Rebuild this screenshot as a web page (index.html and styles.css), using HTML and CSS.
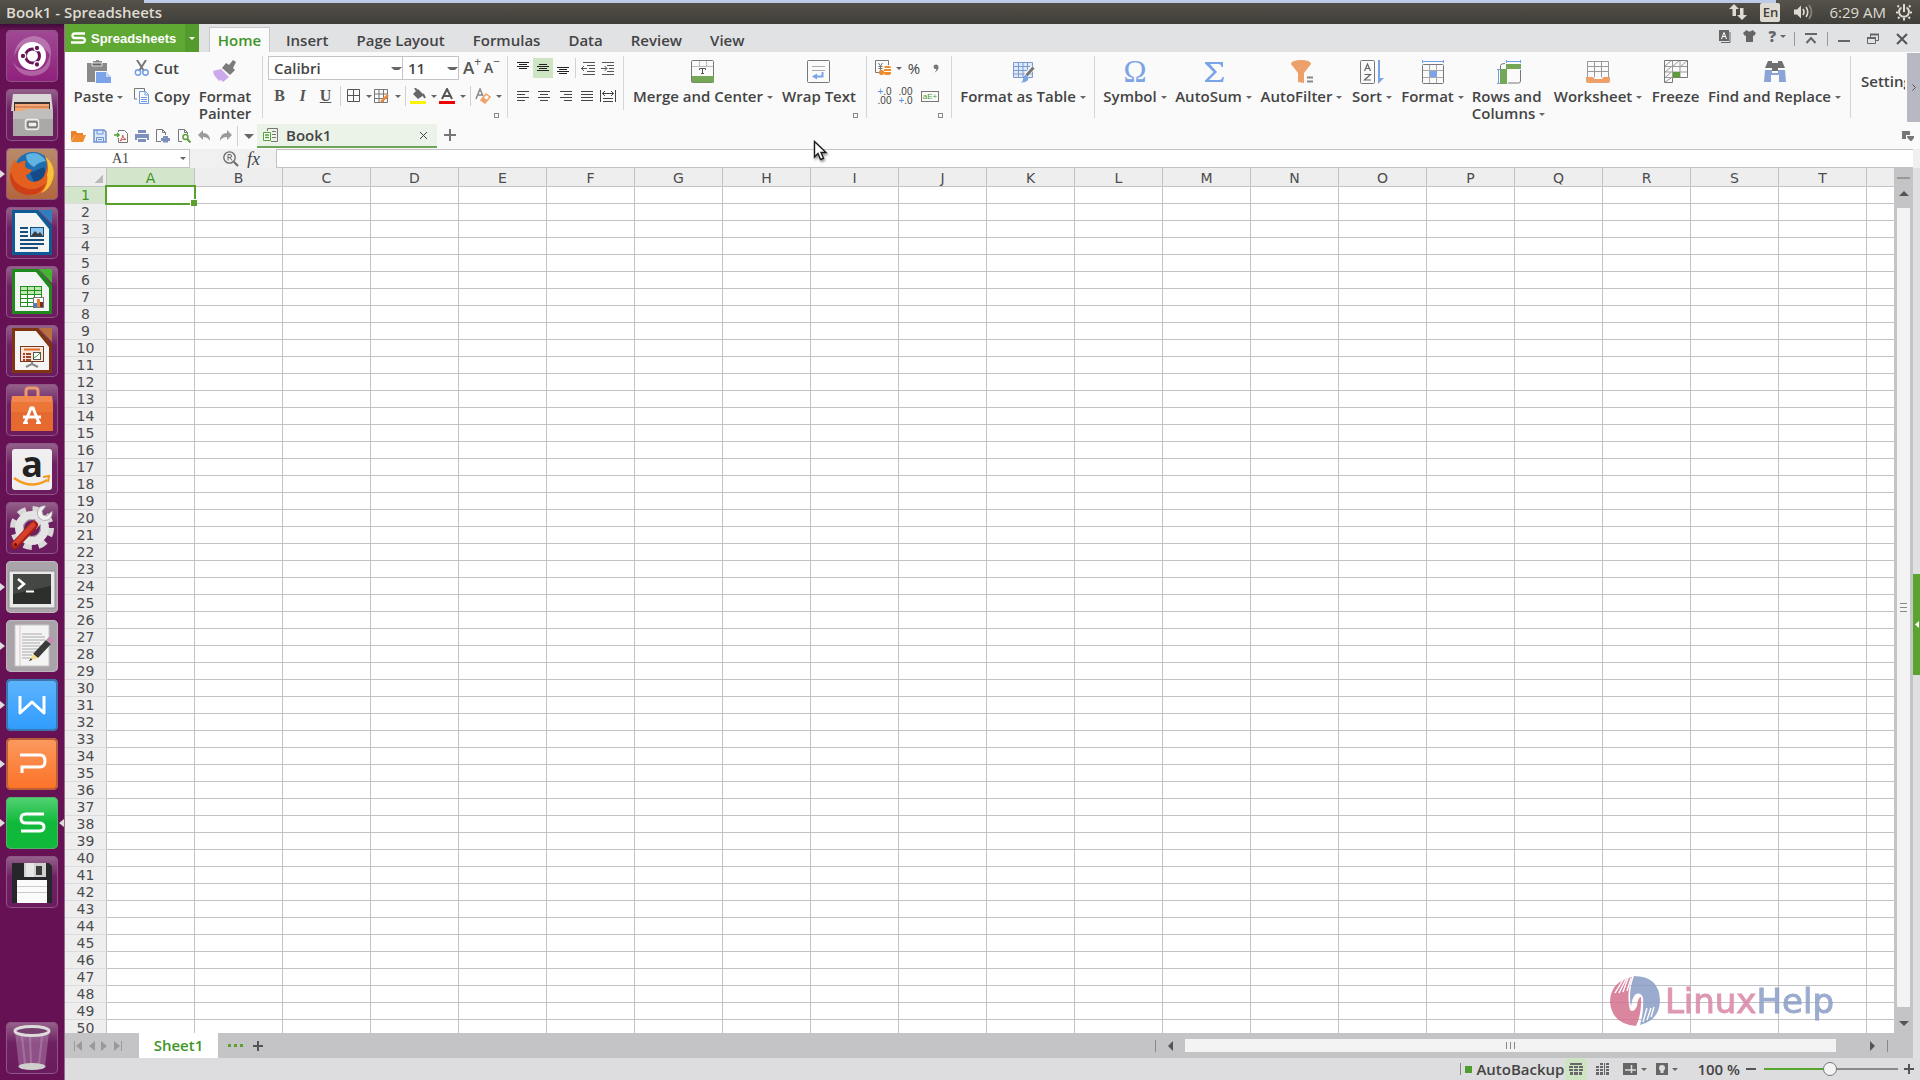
FILE: index.html
```html
<!DOCTYPE html>
<html lang="en">
<head>
<meta charset="utf-8">
<title>Book1 - Spreadsheets</title>
<link rel="stylesheet" href="styles.css">
</head>
<body>
<header class="panel">
  <span class="panel-title">Book1 - Spreadsheets</span>
  <div class="indicators">
    <svg width="18" height="18" viewBox="0 0 18 18" fill="#dfdbd2"><path d="M5 1l5 5H7v7H3.500V6H0zM13 17l-5-5h3V5h3.500v7H18z"/></svg>
    <span class="lang">En</span>
    <svg width="20" height="18" viewBox="0 0 20 18" fill="none" stroke="#dfdbd2" stroke-width="1.600"><path d="M1 6.500h3l4-4v13l-4-4H1z" fill="#dfdbd2" stroke="none"/><path d="M10 6q2 3 0 6M13 4q3.500 5 0 10"/><path d="M16 2q5 7 0 14" stroke="#8b8880"/></svg>
    <span class="clock">6:29 AM</span>
    <svg width="18" height="18" viewBox="0 0 18 18" fill="none" stroke="#dfdbd2"><path d="M6.500 4.500a5 5 0 1 0 5 0" stroke-width="2"/><path d="M9 1v8" stroke-width="2"/><path d="M4 4L2.500 2.500M14 4l1.500-1.500M3 9.500H1M17 9.500h-2M4.500 14L3 15.500M13.500 14l1.500 1.500M9 15v2.500" stroke-width="2"/></svg>
  </div>
</header>
<div class="desktop">
<nav class="launcher" aria-label="Launcher">
  <a href="#" class="tile dash" title="Dash"><svg viewBox="0 0 52 52"><path d="M8 26Q10 8 28 6Q46 8 45 26Q36 12 22 13Q12 16 8 26zM26 46Q12 46 7 32Q12 40 24 41Q42 42 44 22Q48 44 26 46z" fill="#fff" opacity=".28"/><circle cx="26" cy="26" r="14" fill="#fff"/><circle cx="26.500" cy="26" r="7" fill="none" stroke="#6b1458" stroke-width="3"/><g stroke="#fff" stroke-width="1.300" fill="#6b1458"><circle cx="17" cy="26" r="2.800"/><circle cx="31" cy="18" r="2.800"/><circle cx="31" cy="34.500" r="2.800"/></g></svg></a>
  <a href="#" class="tile" title="Files"><svg viewBox="0 0 52 52"><path d="M7 5h38l2 17H5z" fill="#d9d7d5"/><path d="M8 13h36v10H8z" fill="#3d3330"/><path d="M9 15h34v8H9z" fill="#f3a877"/><path d="M9 18h34" stroke="#c26b3b"/><path d="M7 22h11l2-2h27v27H7z" fill="#a9a8a7"/><path d="M7 22h11l2-2h27v10H7z" fill="#bfbebd"/><rect x="19.500" y="30.500" width="13" height="10" rx="2" fill="#b3b2b1" stroke="#ececec" stroke-width="1.500"/><path d="M22 33h9v5h-9z" fill="#eee" stroke="#444"/></svg></a>
  <a href="#" class="tile warm running" title="Firefox"><svg viewBox="0 0 52 52"><circle cx="27" cy="23" r="19" fill="#1f6fb0"/><path d="M20 7q12-6 20 6q-8 1-12 6q-8-4-8-12z" fill="#5fb4e2"/><path d="M24 25l14-6 4 12-11 9z" fill="#164a86"/><path d="M39 8q14 12 6 28Q36 48 24 47Q6 45 4 28Q4 18 9 12Q10 15 13 15Q17 12 20 13Q18 17 20 20L26 22Q24 26 20 27Q21 33 28 34Q38 32 39 25Q43 18 39 8z" fill="#e4601f"/><path d="M39 8q14 12 6 28q-4 7-10 9q8-8 6-18q3-9-2-19z" fill="#f8c13a"/><path d="M5 24q3 14 18 17q10 1 17-6q-5 13-18 12Q5 45 4 28z" fill="#cf3f17"/></svg></a>
  <a href="#" class="tile" title="Writer"><svg viewBox="0 0 52 52"><path d="M6 3h26l14 16v29H6z" fill="#0d5a94"/><path d="M33 3h13v14z" fill="#2f7fc0"/><path d="M9 6h21l13 16v23H9z" fill="#f4f4f4"/><path d="M14 21h8M14 25h8M14 29h8M14 33h24M14 37h24M14 41h18" stroke="#164e7c" stroke-width="2"/><rect x="24.500" y="20.500" width="13" height="9" fill="#8ec5ee" stroke="#164e7c"/><path d="M25 29l4-5 3 3 2-2 3 4z" fill="#3c3c3c"/></svg></a>
  <a href="#" class="tile" title="Calc"><svg viewBox="0 0 52 52"><path d="M6 3h26l14 16v29H6z" fill="#1f8a1c"/><path d="M33 3h13v14z" fill="#43b52f"/><path d="M9 6h21l13 16v23H9z" fill="#f4f4f4"/><path d="M14 20h22v21H14z" fill="#1f8f1d"/><path d="M15 21h6v3h-6zM22 21h6v3h-6zM29 21h6v3h-6zM15 25h6v3h-6zM22 25h6v3h-6zM29 25h6v3h-6z" fill="#bfe8b0"/><path d="M15 29h6v3h-6zM22 29h6v3h-6zM15 33h6v3h-6zM22 33h6v3h-6zM15 37h6v3h-6zM22 37h6v3h-6zM29 29h6v3h-6z" fill="#fff"/><rect x="27.500" y="31.500" width="10" height="10" fill="#fff" stroke="#777"/><path d="M28 37h3v4h-3z" fill="#3b7fd0"/><path d="M31 33h3v8h-3z" fill="#e8822b"/><path d="M34 36h3v5h-3z" fill="#7d2a1d"/></svg></a>
  <a href="#" class="tile" title="Impress"><svg viewBox="0 0 52 52"><path d="M6 3h26l14 16v29H6z" fill="#7f3512"/><path d="M33 3h13v14z" fill="#b9703f"/><path d="M9 6h21l13 16v23H9z" fill="#f4f4f4"/><rect x="14.500" y="21.500" width="23" height="15" fill="#f7e8dc" stroke="#7c3a1c"/><path d="M18 24.500h16" stroke="#e06a2c" stroke-width="2"/><path d="M17 29h2M17 32h2M17 35h2" stroke="#b33" stroke-width="2"/><path d="M20 29h5M20 32h5M20 35h5" stroke="#9a4a2a" stroke-width="2"/><rect x="27.500" y="27.500" width="7" height="7" fill="#fff" stroke="#555"/><path d="M28 33l3-2 3-3" stroke="#3a3" fill="none"/><path d="M26 37v2l-6 3M26 39l6 3" stroke="#888" stroke-width="2" fill="none"/></svg></a>
  <a href="#" class="tile" title="Software"><svg viewBox="0 0 52 52"><path d="M20 12V7q0-3 3-3h6q3 0 3 3v5" fill="none" stroke="#e99a6e" stroke-width="3"/><path d="M6 12h40l1 7H5z" fill="#f2874f"/><path d="M5 18h42v29H5z" fill="#e66a30"/><path d="M5 18h42v10H5z" fill="#ec7538"/><path d="M19 39l6-15h2l6 15" fill="none" stroke="#fff" stroke-width="3"/><path d="M17 33h18" stroke="#fff" stroke-width="3"/><path d="M17 39h5M30 39h5" stroke="#fff" stroke-width="2"/></svg></a>
  <a href="#" class="tile" title="Amazon"><svg viewBox="0 0 52 52"><rect x="6" y="6" width="40" height="41" rx="3" fill="#efefef"/><text x="26" y="34" class="amazon-a" text-anchor="middle">a</text><path d="M8 35q17 12 33 2" fill="none" stroke="#f59a1f" stroke-width="2.600"/><path d="M37 34l6-1-1 6" fill="none" stroke="#f59a1f" stroke-width="2"/></svg></a>
  <a href="#" class="tile" title="System Settings"><svg viewBox="0 0 52 52"><circle cx="26" cy="26" r="18.500" fill="none" stroke="#d8d8d8" stroke-width="7" stroke-dasharray="8 6.530"/><circle cx="26" cy="26" r="13" fill="none" stroke="#e4e4e4" stroke-width="8"/><circle cx="26" cy="26" r="8.500" fill="none" stroke="#b9b9b9"/><path d="M28 25l6-7" stroke="#ddd" stroke-width="6"/><path d="M46 9l-5 5-4-1-1-4 4-5q-6-1-8 4q-2 4 1 8q4 4 9 2q5-3 4-9z" fill="#f1f1f1" stroke="#999" stroke-width=".7"/><path d="M9 43L28 23" stroke="#a51f12" stroke-width="8" stroke-linecap="round"/><path d="M9 42L27 23" stroke="#d6402f" stroke-width="5" stroke-linecap="round"/><circle cx="9.500" cy="42.500" r="1.500" fill="#5b0d08"/></svg></a>
  <a href="#" class="tile gray running" title="Terminal"><svg viewBox="0 0 52 52"><rect x="3" y="10" width="46" height="37" rx="1" fill="#e9e9e9" stroke="#8c8c8c"/><rect x="7" y="13" width="38" height="30" fill="#2d2f2d"/><path d="M7 13h38v12L7 33z" fill="#454745"/><path d="M12 18l6 5-6 5" fill="none" stroke="#fff" stroke-width="2.500"/><path d="M20 30.500h8" stroke="#fff" stroke-width="2"/></svg></a>
  <a href="#" class="tile gray running" title="Text Editor"><svg viewBox="0 0 52 52"><path d="M9 5h34v41H9z" fill="#f4f4f4" stroke="#c9c6c6"/><path d="M14 5v41" stroke="#e2c3c3"/><path d="M16 14h20M16 17h23M16 20h23M16 23h18M16 26h20M16 29h16M16 32h14M16 35h10M16 38h8" stroke="#aaa"/><path d="M27 34L40 20l5 4-13 14z" fill="#3b3b3b"/><path d="M40 20l4-4 4 5-3 3z" fill="#c78bb4"/><path d="M27 34l-4 7 9-3z" fill="#f2dc8a"/><path d="M23 41l2-3 1 2z" fill="#222"/></svg></a>
  <a href="#" class="tile blue running" title="Writer WPS"><svg viewBox="0 0 52 52"><path d="M14 17v17l12-11 12 11V17" fill="none" stroke="#fff" stroke-width="3" stroke-linejoin="round"/></svg></a>
  <a href="#" class="tile orange running" title="Presentation WPS"><svg viewBox="0 0 52 52"><path d="M14 17h20q5 0 5 6t-5 6H16v6" fill="none" stroke="#fff" stroke-width="3"/></svg></a>
  <a href="#" class="tile green running active" title="Spreadsheets WPS"><svg viewBox="0 0 52 52"><path d="M38 17H20q-5 0-5 4.500t5 4.500h13q5 0 5 4t-5 4H15" fill="none" stroke="#fff" stroke-width="3"/></svg></a>
  <a href="#" class="tile" title="Floppy Disk"><svg viewBox="0 0 52 52"><path d="M6 7h37l3 3v37H6z" fill="#26272b"/><path d="M18 7h22v14H18z" fill="#cfcfcf"/><path d="M20 7h8v14h-8z" fill="#e6e6e6"/><rect x="30" y="10" width="6" height="9" fill="#3a3a3a"/><path d="M11 24h30v23H11z" fill="#fbfbfb"/><path d="M11 30.500h30M11 36.500h30" stroke="#ccc"/></svg></a>
  <a href="#" class="tile trash" title="Trash"><svg viewBox="0 0 52 52"><path d="M9 10l4 35q13 5 26 0l4-35z" fill="#d9c4de" opacity=".3"/><path d="M16 14l3 28M24 14l1 28M36 14l-3 28" stroke="#fff" opacity=".18" stroke-width="2"/><ellipse cx="26" cy="9" rx="17" ry="4.500" fill="#77406f" stroke="#dcdcdc" stroke-width="3"/><ellipse cx="26" cy="44.500" rx="13.500" ry="3.500" fill="#cfcfcf"/></svg></a>
</nav>

<main class="app">
  <div class="tabbar">
    <button class="app-menu"><svg width="15" height="12" viewBox="0 0 15 12" fill="none" stroke="#fff" stroke-width="2.400"><path d="M14 1.500H4Q1.500 1.500 1.500 3.700T4 6h7.500q2.300 0 2.300 2.300t-2.300 2.200H0"/></svg><span class="app-name">Spreadsheets</span><span class="app-drop"><i class="caret"></i></span></button>
    <div class="tabs">
      <button class="tab on">Home</button><button class="tab">Insert</button><button class="tab">Page Layout</button><button class="tab">Formulas</button><button class="tab">Data</button><button class="tab">Review</button><button class="tab">View</button>
    </div>
    <div class="wintools">
      <div class="helpers">
      <button title="Dictionary"><svg width="12" height="13" viewBox="0 0 12 13"><path d="M0 0h10v11H0z" fill="#666"/><path d="M11 2v10.500H2" fill="none" stroke="#666"/><path d="M2.500 9L5 2.500 7.500 9M3.500 6.500h3" fill="none" stroke="#fff"/></svg></button>
      <button title="Skin"><svg width="13" height="12" viewBox="0 0 13 12"><path d="M3.500 0Q6.500 3 9.500 0L13 3l-2 3-1-.5V12H3V5.500L2 6 0 3z" fill="#666"/></svg></button>
      <button class="help" title="Help"><b>?</b><i class="caret"></i></button>
      </div>
      <span class="rule"></span>
      <button title="Collapse ribbon"><svg width="12" height="12" viewBox="0 0 12 12" fill="none" stroke="#666" stroke-width="2"><path d="M0 1h12M1.500 10L6 5l4.500 5"/></svg></button>
      <span class="rule"></span>
      <button title="Minimize"><svg width="12" height="12" viewBox="0 0 12 12"><path d="M0 7h12v2H0z" fill="#666"/></svg></button>
      <button title="Restore"><svg width="12" height="12" viewBox="0 0 12 12" fill="none" stroke="#666"><path d="M.5 5.500h8v5h-8z M3.500 5V1.500h8v6H9" /><path d="M0 5h9M3 1.500h9" stroke-width="2"/></svg></button>
      <button title="Close"><svg width="12" height="12" viewBox="0 0 12 12" fill="none" stroke="#555" stroke-width="2"><path d="M1 1l10 10M11 1L1 11"/></svg></button>
    </div>
  </div>

  <div class="ribbon">
    <section class="group clip">
      <button class="big"><svg width="24" height="24" viewBox="0 0 24 24"><path d="M0 3h6V1h3V0h3v1h3v2h5v8H8v11H0z" fill="#8a8a8a"/><path d="M5 3h10v3H5z" fill="#666" stroke="#fafafa" stroke-width=".8"/><path d="M9 12h10l5 5v6H9z" fill="#7ba3e8"/><path d="M19 12l5 5h-5z" fill="#c4d7f6"/></svg><span>Paste<i class="caret"></i></span></button>
      <div class="stack">
        <button><svg width="16" height="16" viewBox="0 0 16 16" fill="none"><path d="M3 0l7 11M12 0L5 11" stroke="#777" stroke-width="2"/><circle cx="4" cy="12.500" r="2.700" stroke="#6d9be6" stroke-width="1.400"/><circle cx="11.500" cy="12.500" r="2.700" stroke="#6d9be6" stroke-width="1.400"/></svg>Cut</button>
        <button><svg width="16" height="16" viewBox="0 0 16 16" fill="none"><path d="M3 11H.5V.5h10V3" stroke="#777"/><path d="M5.500 3.500h6l3 3v9h-9z" stroke="#6d9be6"/><path d="M11 4v3h3M7 9.500h6M7 11.500h6M7 13.500h6" stroke="#6d9be6"/></svg>Copy</button>
      </div>
      <button class="big"><svg width="24" height="24" viewBox="0 0 24 24"><path d="M20 0l3 2-3 6 2 2-5 5-8-7 4-5 3 2z" fill="#7c7c7c"/><path d="M8 9l8 8-6 5-2-2-2 1-5-6-1-4z" fill="#cda8ec"/></svg><span>Format<br>Painter</span></button>
    </section>
    <section class="group font">
      <div class="row combos">
        <label class="combo wide"><select aria-label="Font"><option>Calibri</option></select><i class="caret"></i></label>
        <label class="combo"><select aria-label="Font size"><option>11</option></select><i class="caret"></i></label>
        <button class="grow" title="Increase font size">A<sup>+</sup></button>
        <button class="grow small" title="Decrease font size">A<sup>−</sup></button>
      </div>
      <div class="row">
        <button class="bi serif"><b>B</b></button><button class="bi serif"><em>I</em></button><button class="bi serif"><u>U</u></button>
        <span class="sep"></span>
        <button class="split"><svg width="16" height="16" viewBox="0 0 16 16" fill="none" stroke="#555" stroke-width="1"><path d="M2.500 1.500h12v12h-12zM8.500 2v12M2 7.500h12"/></svg><i class="caret"></i></button>
        <button class="split"><svg width="16" height="16" viewBox="0 0 16 16" fill="none" stroke="#777"><path d="M.5 1.500h13v13H.5zM5 1v13M9.500 1v13M0 6h14M0 10.500h14"/><path d="M7 14l7-7" stroke="#ee8a3c" stroke-width="2.500"/></svg><i class="caret"></i></button>
        <span class="sep"></span>
        <button class="split"><svg width="16" height="16" viewBox="0 0 16 16"><path d="M3 6l5-5 6 6-6 4z" fill="#666"/><path d="M5 0l2 3M13 6l2 4" stroke="#666" stroke-width="2"/><path d="M0 13h16v3H0z" fill="#fbf400"/></svg><i class="caret"></i></button>
        <button class="split"><svg width="16" height="16" viewBox="0 0 16 16"><path d="M3 11L8 1l5 10M5 8h6" fill="none" stroke="#555" stroke-width="2"/><path d="M0 13h16v3H0z" fill="#f00000"/></svg><i class="caret"></i></button>
        <span class="sep"></span>
        <button class="split"><svg width="16" height="16" viewBox="0 0 16 16" fill="none"><path d="M1 11L5 1l3 7M3 7h4" stroke="#888" stroke-width="1.500"/><path d="M6 12l5-6 4 3-5 6z" fill="#fff" stroke="#efa066" stroke-width="1.500"/><path d="M6 12l2-3 4 3-2 3z" fill="#efa066"/></svg><i class="caret"></i></button>
      </div>
      <button class="dialog" title="Font settings"></button>
    </section>
    <section class="group align">
      <div class="row">
        <button class="ic"><svg width="14" height="14" viewBox="0 0 14 14" stroke="#222"><path d="M1 1.500h12M3 3.500h8M1 5.500h12M3 7.500h8"/></svg></button>
        <button class="ic on"><svg width="14" height="14" viewBox="0 0 14 14" stroke="#222"><path d="M3 3.500h8M1 5.500h12M3 7.500h8M1 9.500h12"/></svg></button>
        <button class="ic"><svg width="14" height="14" viewBox="0 0 14 14" stroke="#222"><path d="M1 6.500h12M3 8.500h8M1 10.500h12M3 12.500h8"/></svg></button>
        <span class="sep"></span>
        <button class="ic"><svg width="14" height="14" viewBox="0 0 14 14" stroke="#555" fill="none"><path d="M2 1.500h12M6 4.500h8M8 7.500h6M6 10.500h8M2 13.500h12M0 7.500h6M3 5L.5 7.500 3 10"/></svg></button>
        <button class="ic"><svg width="14" height="14" viewBox="0 0 14 14" stroke="#555" fill="none"><path d="M1 1.500h12M6 4.500h7M8 7.500h5M6 10.500h7M1 13.500h12M0 7.500h6M3.500 5L6 7.500 3.500 10"/></svg></button>
      </div>
      <div class="row spread">
        <button class="ic"><svg width="14" height="14" viewBox="0 0 14 14" stroke="#444"><path d="M1 2.500h12M1 5.500h8M1 8.500h12M1 11.500h8"/></svg></button>
        <button class="ic"><svg width="14" height="14" viewBox="0 0 14 14" stroke="#444"><path d="M1 2.500h12M3 5.500h8M1 8.500h12M3 11.500h8"/></svg></button>
        <button class="ic"><svg width="14" height="14" viewBox="0 0 14 14" stroke="#444"><path d="M1 2.500h12M5 5.500h8M1 8.500h12M5 11.500h8"/></svg></button>
        <button class="ic"><svg width="14" height="14" viewBox="0 0 14 14" stroke="#444"><path d="M1 2.500h12M1 5.500h12M1 8.500h12M1 11.500h12"/></svg></button>
        <button class="ic"><svg width="16" height="14" viewBox="0 0 16 14" stroke="#444" fill="none"><path d="M.5 1v12M15.500 1v12M2 4.500h12M5 2L2.500 4.500 5 7M11 2l2.500 2.500L11 7M3 9.500h10M3 12.500h10"/></svg></button>
      </div>
    </section>
    <section class="group merge">
      <button class="big"><svg width="24" height="24" viewBox="0 0 24 24" fill="none"><rect x=".5" y=".5" width="22" height="22" rx="1" stroke="#777"/><path d="M1 6.500h21M8.500 1v5M15.500 1v5" stroke="#bbb"/><path d="M8.500 10V8.500h6V10M11.500 8v6M10 13.500h3" stroke="#555"/><path d="M1 16h22v6.500H1z" fill="#74a856"/></svg><span>Merge and Center<i class="caret"></i></span></button>
      <button class="big"><svg width="24" height="24" viewBox="0 0 24 24" fill="none"><rect x=".5" y=".5" width="22" height="22" rx="1" stroke="#777"/><path d="M5 6.500h13M5 10.500h13" stroke="#aaa"/><path d="M15.500 12v4.500H8" stroke="#7ba3e8" stroke-width="2"/><path d="M5 16.500l5-3v6z" fill="#7ba3e8"/></svg><span>Wrap Text</span></button>
      <button class="dialog" title="Alignment settings"></button>
    </section>
    <section class="group num">
      <div class="row">
        <button class="split"><svg width="16" height="16" viewBox="0 0 16 16" fill="none"><path d="M4 12.500H.5V.5h13V5" stroke="#777"/><path d="M3.500 3L5.500 6l2-3M5.500 6v4M3.500 6.500h4M3.500 8.500h4" stroke="#777"/><rect x="9" y="6" width="7" height="9" rx="2" fill="#ee8a2c"/><rect x="4" y="10" width="5" height="5" rx="2" fill="#ee8a2c"/><path d="M9 8.500h7M9 11.500h7" stroke="#fff"/></svg><i class="caret"></i></button>
        <button class="bi pct">%</button><button class="bi" title="Comma style"><svg width="6" height="9" viewBox="0 0 6 9"><path d="M1 8.500Q3.500 7 3.500 5 .5 5.500.5 2.800.7.500 3 .5 5.500.500 5.500 3.500 5.300 7 1 8.500z" fill="#777"/></svg></button>
      </div>
      <div class="row">
        <button class="dec" title="Increase decimal"><span><i>+</i>.0</span><span>.00</span></button>
        <button class="dec" title="Decrease decimal"><span>.00</span><span><i>+</i>.0</span></button>
        <button class="dec"><span class="ae">aE+</span></button>
      </div>
      <button class="dialog" title="Number settings"></button>
    </section>
    <section class="group style">
      <button class="big"><svg width="24" height="24" viewBox="0 0 24 24" fill="none"><path d="M2.500 2.500h19v15h-19z" fill="#dfe9f8" stroke="#7c9cd0"/><path d="M7.500 3v14M12 3v14M16.500 3v14M3 6.500h18M3 10.500h18M3 14h18" stroke="#7c9cd0"/><path d="M22 7l-7 9" stroke="#fafafa" stroke-width="5"/><path d="M22.500 7.500l-7 8" stroke="#777" stroke-width="3"/><path d="M15 15l2.500 2.500q0 5-7.500 5q2-1 2-4t3-3.500z" fill="#7ba3e8"/></svg><span>Format as Table<i class="caret"></i></span></button>
    </section>
    <section class="group edit">
      <button class="big"><span class="glyph">Ω</span><span>Symbol<i class="caret"></i></span></button>
      <button class="big"><svg width="24" height="24" viewBox="0 0 24 24"><path d="M3 2h18v5h-1.500q-.5-3-3-3H8l7 8-8 8h10q3 0 3.500-3H22l-1 5H3v-1.500L11.500 12 3 3.500z" fill="#7ba3e8"/></svg><span>AutoSum<i class="caret"></i></span></button>
      <button class="big"><svg width="24" height="24" viewBox="0 0 24 24"><ellipse cx="11" cy="3.500" rx="10" ry="3.500" fill="#eda06a"/><path d="M1 4l7 9v9l6 1V13l7-9z" fill="#eda06a"/><path d="M17 17.500h6M17 21.500h6" stroke="#888" stroke-width="2"/></svg><span>AutoFilter<i class="caret"></i></span></button>
      <button class="big"><svg width="24" height="24" viewBox="0 0 24 24" fill="none"><rect x=".5" y=".5" width="14" height="23" rx="1" stroke="#777"/><path d="M4.500 11l3-7 3 7M5.500 8.500h4M4.500 14.500h6l-6 5.500h6.500" stroke="#666" stroke-width="1.200"/><path d="M19 0v22" stroke="#7ba3e8" stroke-width="2"/><path d="M18 18h6l-6 6z" fill="#7ba3e8"/></svg><span>Sort<i class="caret"></i></span></button>
      <button class="big"><svg width="24" height="24" viewBox="0 0 24 24" fill="none"><path d="M2 1.500h20M1.500 0v3M22.500 0v3" stroke="#6f9fe6"/><rect x="1.500" y="4.500" width="21" height="19" rx="1" stroke="#777"/><path d="M8.500 5v18M15.500 5v18M2 10.500h20M2 17.500h20" stroke="#aaa"/><path d="M9 11h7v6H9z" fill="#7ba3e8"/></svg><span>Format<i class="caret"></i></span></button>
      <button class="big"><svg width="24" height="24" viewBox="0 0 24 24" fill="none"><path d="M10 1.500h13M9.500 0v3M23.500 0v3M1.500 9v14M0 9.500h3M0 23.500h3" stroke="#6f9fe6"/><path d="M9 4h15v5H9zM3 9h7v15H3z" fill="#74a856"/><path d="M3.500 9V5.500Q3.500 3.500 8 3.500M23.500 10v11q0 2-2 2H11" stroke="#777"/></svg><span class="left">Rows and<br>Columns<i class="caret"></i></span></button>
      <button class="big"><svg width="24" height="24" viewBox="0 0 24 24" fill="none"><path d="M1.500 18V1.500h21V18M8.500 2v15M15.500 2v15M2 6.500h20M2 11.500h20" stroke="#999"/><path d="M0 17h6q2 0 2 1t2 1h6q0-2 2-2h6v4q0 2-2 2H2q-2 0-2-2z" fill="#eda06a"/></svg><span>Worksheet<i class="caret"></i></span></button>
      <button class="big"><svg width="24" height="24" viewBox="0 0 24 24" fill="none"><path d="M.5.5h23v17h-15v5h-8z" stroke="#777"/><path d="M8.500 1v17M16 1v16M1 6.500h22M1 12h22M1 17.500h8M1 6l6-5M9 6l6-5M17 6l6-5M1 12l6-5M1 17.500l6-5M1 22l6-4" stroke="#999"/><path d="M9 12h7v5.500H9z" fill="#5e9a3d"/></svg><span>Freeze</span></button>
      <button class="big"><svg width="24" height="24" viewBox="0 0 24 24"><path d="M5 1h4v2h6V1h4l3 7h-7v3H9V8H2z" fill="#707070"/><path d="M2 10h7v3h6v-3h7l1 12h-7v-7H8v7H1z" fill="#8ba4d6"/></svg><span>Find and Replace<i class="caret"></i></span></button>
    </section>
    <section class="group settings"><button>Settings</button></section>
    <button class="ribbon-more" title="More"><svg width="4" height="7" viewBox="0 0 4 7" fill="none" stroke="#555"><path d="M.5.500l3 3-3 3"/></svg></button>
  </div>

  <div class="docbar">
    <div class="quick">
      <button title="Open"><svg width="15" height="14" viewBox="0 0 15 14"><path d="M0 2h5l1 2h6v2H4L0 12z" fill="#e8822b"/><path d="M4 6h11l-3 7H0z" fill="#f08c30"/></svg></button>
      <button title="Save"><svg width="14" height="14" viewBox="0 0 14 14" fill="none" stroke="#6d92cf"><path d="M1 1h10l2 2v10H1z" fill="#dce7f8" stroke-width="1.500"/><path d="M4 1v4h6V1M3.500 13V8.500h7V13M5 10.500h4"/></svg></button>
      <button title="PDF"><svg width="14" height="14" viewBox="0 0 14 14" fill="none"><path d="M4.500 3V1.500h6l3 3v9h-9V9" stroke="#777"/><path d="M0 6h5M3 4l2 2-2 2" stroke="#58a03a" stroke-width="1.500"/><path d="M6 12q3-3 2.500-6Q9 9 12 10.500q-3-1-6 1.500z" stroke="#d2554c"/></svg></button>
      <button title="Print"><svg width="14" height="14" viewBox="0 0 14 14"><path d="M3 1h8v3H3zM0 5h14v6h-2V9H2v2H0z" fill="#7d90bd"/><path d="M3 10h8v3H3z" fill="#7d90bd"/></svg></button>
      <button title="Print Preview"><svg width="14" height="14" viewBox="0 0 14 14" fill="none"><path d="M5 12.500H.5V.5h6l3 3V6M6.500.5v3h3" stroke="#777"/><path d="M7 7h5v2h2v3h-2v1.500H7V12H5V9h2z" fill="#7d90bd"/></svg></button>
      <button title="Preview"><svg width="14" height="14" viewBox="0 0 14 14" fill="none"><path d="M5 12.500H1.500V.5h6l3 3V5M7.500.5v3h3" stroke="#777"/><circle cx="8.500" cy="8" r="2.500" stroke="#5c9e40" stroke-width="1.500"/><path d="M10 10l3.500 3.500" stroke="#5c9e40" stroke-width="2"/></svg></button>
      <button title="Undo"><svg width="14" height="14" viewBox="0 0 14 14"><path d="M0 6l5-5v3q7 0 7 8-2-4-7-4v3z" fill="#9a9a9a"/></svg></button>
      <button title="Redo"><svg width="14" height="14" viewBox="0 0 14 14"><path d="M13 6L8 1v3q-7 0-7 8 2-4 7-4v3z" fill="#9a9a9a"/></svg></button>
      <span class="sep tall"></span>
      <button class="narrow" title="Customize"><i class="caret large"></i></button>
    </div>
    <div class="doc"><svg width="16" height="16" viewBox="0 0 16 16" fill="none"><path d="M4.500 4V1.500h10v13H8" stroke="#777"/><path d="M9 4.500h4M9 7.500h4M9 10.500h4" stroke="#777"/><path d="M.5 5.500h7v8h-7z" fill="#fff" stroke="#58a03a"/><path d="M2 8h4M2 10.500h4" stroke="#58a03a" stroke-width="1.500"/></svg><span>Book1</span><button title="Close"><svg width="9" height="9" viewBox="0 0 9 9" stroke="#444"><path d="M1 1l7 7M8 1L1 8"/></svg></button></div>
    <button class="new" title="New"><svg width="12" height="12" viewBox="0 0 12 12" stroke="#777" stroke-width="2"><path d="M6 0v12M0 6h12"/></svg></button>
    <button class="pane" title="Tab list"><svg width="12" height="11" viewBox="0 0 12 11" fill="#777"><path d="M0 0h8v4H4v4H0zM5 5h7v2L9 10.500 5.500 7z"/></svg></button>
  </div>

  <div class="formula">
    <label class="namebox"><input value="A1" aria-label="Name box"><i class="caret"></i></label>
    <div class="fx-tools">
      <button title="Search"><svg width="16" height="16" viewBox="0 0 16 16" fill="none" stroke="#666"><circle cx="6.500" cy="6.500" r="5.700" stroke-width="1.300"/><path d="M5 9.500v-6h2q1.500 0 1.500 1.500T7 6.500H5M7 6.500l2 3"/><path d="M11 11l4 4" stroke-width="2"/></svg></button>
      <button class="fx" title="Insert function">fx</button>
    </div>
    <input class="fbar" aria-label="Formula">
  </div>

  <div class="work">
    <div class="content">
      <div class="sheet-area">
        <div class="viewport">
          <table class="sheet" aria-label="Sheet1"><colgroup id="cols"></colgroup><thead id="head"></thead><tbody id="body"></tbody></table>
          <div class="watermark"><svg width="50" height="50" viewBox="0 0 50 50"><path d="M22 1Q0 6 0 26 2 48 26 50 32 38 31 21q-3 0-4 9-3 7-7 4Q16 18 22 1z" fill="#d4718f"/><path d="M24 0q25 0 26 24 0 20-20 25 4-14 3-27-2-6-7-4-4 3-5 13-3-15 3-31z" fill="#8a9dc6"/><path d="M5 17L13 4M9 17l7-14M13 16l5-14M17 15l4-13M33 46l4-14M37 44l4-12M41 41l3-10" stroke="#fff" stroke-width="1.400"/></svg><span><b>Linux</b>Help</span></div>
        </div>
        <div class="vscroll"><i class="splitter"></i><i class="arrow up"></i><div class="vthumb"><i></i><i></i><i></i></div><i class="arrow down"></i></div>
      </div>
      <div class="sheetbar">
        <div class="navs">
          <button><svg width="8" height="10" viewBox="0 0 8 10" fill="#999"><path d="M0 0h1v10H0zM8 0v10L2 5z"/></svg></button>
          <button><svg width="6" height="10" viewBox="0 0 6 10" fill="#999"><path d="M6 0v10L0 5z"/></svg></button>
          <button><svg width="6" height="10" viewBox="0 0 6 10" fill="#999"><path d="M0 0v10l6-5z"/></svg></button>
          <button><svg width="8" height="10" viewBox="0 0 8 10" fill="#999"><path d="M7 0h1v10H7zM0 0v10l6-5z"/></svg></button>
        </div>
        <button class="sheet-tab">Sheet1</button>
        <button class="dots" title="All sheets"><i></i><i></i><i></i></button>
        <button title="Add sheet"><svg width="10" height="10" viewBox="0 0 10 10" stroke="#555" stroke-width="2"><path d="M5 0v10M0 5h10"/></svg></button>
        <div class="hscroll"><i class="bar"></i><i class="arrow left"></i><div class="htrack"><div class="hthumb"><i></i><i></i><i></i></div></div><i class="arrow right"></i><i class="bar"></i></div>
      </div>
    </div>
    <aside class="side"><button title="Task pane"><svg width="4" height="7" viewBox="0 0 4 7"><path d="M4 0v7L0 3.500z" fill="#fff"/></svg></button></aside>
  </div>

  <footer class="status">
    <i class="bar"></i><i class="led"></i><span class="backup">AutoBackup</span>
    <button class="view on" title="Normal"><svg width="14" height="12" viewBox="0 0 14 12" fill="#666"><path d="M1 0h12v2H1zM0 3h4v2H0zM5 3h4v2H5zM10 3h4v2h-4zM0 6h4v2H0zM5 6h4v2H5zM10 6h4v2h-4zM1 9h3v3H1zM5 9h4v3H5zM10 9h3v3h-3z"/></svg></button>
    <button class="view" title="Page break"><svg width="14" height="12" viewBox="0 0 14 12" fill="#666"><path d="M0 3h3v2H0zM4 3h3v2H4zM0 6h3v2H0zM4 6h3v2H4zM0 9h3v3H0zM4 9h3v3H4zM8 0h1v12H8zM10 0h3v2h-3zM10 3h3v2h-3zM10 6h3v2h-3zM10 9h3v3h-3zM4 0h3v2H4z"/></svg></button>
    <button class="view drop" title="Freeze"><svg width="14" height="12" viewBox="0 0 14 12"><path d="M0 0h14v12H0z" fill="#666"/><path d="M8.500 2v8M2 7h11" stroke="#ddd" stroke-width="1.500"/></svg><i class="caret"></i></button>
    <button class="view drop" title="Reading"><svg width="12" height="12" viewBox="0 0 12 12"><path d="M0 0h12v12H0z" fill="#666"/><circle cx="6" cy="5" r="3" fill="#ddd"/><path d="M4.500 7h3v3h-3z" fill="#ddd"/></svg><i class="caret"></i></button>
    <span class="pctval">100 %</span>
    <button class="zoom"><svg width="10" height="10" viewBox="0 0 10 10" stroke="#555" stroke-width="2"><path d="M0 5h10"/></svg></button>
    <input type="range" min="0" max="100" value="49" aria-label="Zoom">
    <button class="zoom"><svg width="10" height="10" viewBox="0 0 10 10" stroke="#555" stroke-width="2"><path d="M5 0v10M0 5h10"/></svg></button>
  </footer>
</main>
</div>
<svg class="pointer" width="15" height="22" viewBox="0 0 15 22"><path d="M1.500 1.500v15.500l3.500-3.500 2.500 6 3-1.200-2.500-5.800h5z" fill="#fff" stroke="#1c1c1c" stroke-width="1.400"/></svg>
<script src="grid.js"></script>
</body>
</html>
```
FILE: grid.js
```js
const letters = "ABCDEFGHIJKLMNOPQRST".split("");
const rowCount = 50;

document.getElementById("cols").innerHTML =
  '<col class="c-head">' + letters.map(() => '<col class="c-cell">').join("") + "<col>";

document.getElementById("head").innerHTML =
  '<tr><th class="corner"></th>' +
  letters.map((l, i) => `<th scope="col"${i === 0 ? ' class="sel"' : ""}>${l}</th>`).join("") +
  "<th></th></tr>";

let rows = "";
for (let r = 1; r <= rowCount; r++) {
  rows += `<tr><th scope="row"${r === 1 ? ' class="sel"' : ""}>${r}</th>`;
  for (let c = 0; c <= letters.length; c++) {
    rows += r === 1 && c === 0 ? '<td class="cursor"></td>' : "<td></td>";
  }
  rows += "</tr>";
}
document.getElementById("body").innerHTML = rows;
```
FILE: styles.css
```css
* { box-sizing: border-box; }
body {
  margin: 0;
  height: 100vh;
  display: flex;
  flex-direction: column;
  overflow: hidden;
  font: 600 15px/17px "Open Sans", "Noto Sans", sans-serif;
  color: #444;
}
button, input, select { font: inherit; color: inherit; margin: 0; padding: 0; border: 0; background: none; border-radius: 0; }
button { display: flex; align-items: center; justify-content: center; white-space: nowrap; flex: none; }
svg { display: block; flex: none; }
.caret { display: inline-block; flex: none; border: 3px solid transparent; border-top-color: #666; border-bottom: 0; vertical-align: middle; margin-left: 4px; }
.caret.large { border-width: 5px; border-bottom: 0; margin: 0; }

/* top panel */
.panel { flex: none; height: 24px; display: flex; align-items: center; justify-content: space-between; padding: 0 7px 0 6px; background: linear-gradient(90deg, #0000 144px, #bccbe6 144px, #bccbe6 1776px, #0000 1776px) 0 0 / 100% 3px no-repeat, linear-gradient(#55524a, #3f3e38); color: #dfdbd2; }
.indicators { display: flex; align-items: center; gap: 13px; }
.lang { background: #dfdbd2; color: #3f3e38; border-radius: 2px; width: 20px; line-height: 19px; text-align: center; font-size: 13px; margin-top: 1px; }
.clock { font-weight: 400; margin: 0 -4px 0 3px; }

.desktop { flex: 1; display: flex; min-height: 0; }

/* launcher */
.launcher { flex: none; width: 65px; display: flex; flex-direction: column; gap: 7px; padding: 6px; background: linear-gradient(#3f0d38, #651153 6px); border-right: 1px solid #9a6a90; }
.tile { position: relative; width: 52px; height: 52px; border-radius: 5px; background: linear-gradient(#95648c, #6e2162 40%, #6b1b5e); box-shadow: inset 0 0 0 1px #8f5587; }
.tile svg { width: 52px; height: 52px; }
.dash { background: linear-gradient(#a04a94, #8f1f7c); }
.warm { background: linear-gradient(#b98b6c, #b2653c); }
.gray { background: #aaa3aa; box-shadow: inset 0 0 0 1px #bdb6bd; }
.blue { background: linear-gradient(#5fb4fc, #2f9bff); box-shadow: inset 0 0 0 2px #3b76ae; }
.orange { background: linear-gradient(#fb9a60, #fc7126); box-shadow: inset 0 0 0 2px #b9603a; }
.green { background: linear-gradient(#53d274, #10b93a 50%); box-shadow: inset 0 0 0 1px #55b06c; }
.running::before { content: ""; position: absolute; left: -6px; top: 22px; border: 4px solid transparent; border-left: 5px solid #ddd; border-right: 0; }
.active::after { content: ""; position: absolute; right: -6px; top: 22px; border: 4px solid transparent; border-right: 5px solid #ddd; border-left: 0; }
.trash { margin-top: auto; }
.amazon-a { font: 700 36px "Open Sans", sans-serif; fill: #222; }

.app { flex: 1; min-width: 0; display: flex; flex-direction: column; background: #fafafa; }

/* tab bar */
.tabbar { flex: none; height: 28px; display: flex; background: #e1e2e4; }
.app-menu { background: #5fa833; color: #fff; font: 700 13px "Liberation Sans", sans-serif; width: 134px; justify-content: flex-start; padding-left: 6px; gap: 5px; }
.app-name { flex: 1; text-align: left; }
.app-drop { width: 14px; align-self: stretch; display: flex; align-items: center; justify-content: center; background: #559a2d; }
.app-drop .caret { border-top-color: #fff; margin: 0; }
.tabs { display: flex; padding: 3px 0 0 10px; }
.tab { padding: 2px 14px 0; }
.tab.on { width: 61px; padding: 1px 0 0; background: #fafafa; border: 1px solid #c8c8ca; border-bottom: 0; color: #3f9428; margin-right: 2px; }
.wintools { margin-left: auto; display: flex; align-items: center; padding: 2px 12px 0 0; gap: 10px; }
.helpers { display: flex; gap: 12px; padding-bottom: 6px; margin-right: -2px; }
.help { gap: 0; color: #666; }
.rule { width: 1px; height: 14px; background: #999; }
.wintools > button:nth-last-child(-n+2) { margin-left: 7px; }

/* ribbon */
.ribbon { flex: none; display: flex; height: 72px; padding: 4px 0 6px; position: relative; overflow: hidden; }
.group { flex: none; display: flex; position: relative; border-right: 1px solid #d6d6d8; }
.big { flex-direction: column; justify-content: flex-start; gap: 4px; padding-top: 4px; height: 62px; }
.big .left { text-align: left; }
.glyph { font: 31px/24px "Liberation Serif", serif; color: #7ba3e8; height: 24px; }
.clip { display: grid; grid-template-columns: 67px 64px 58px; padding-right: 8px; }
.stack { display: flex; flex-direction: column; gap: 8px; padding: 2px 0 0 2px; align-items: flex-start; }
.stack button { height: 20px; gap: 4px; }
.font, .align, .num { flex-direction: column; gap: 6px; }
.row { display: flex; align-items: center; height: 20px; }
.row:first-child { height: 24px; }
.font { padding-left: 5px; width: 245px; }
.combos .combo { display: grid; grid-template-columns: 1fr 14px; align-items: center; width: 57px; height: 24px; border: 1px solid #c4c4c6; margin-left: -1px; background: #fff; }
.combos .combo.wide { width: 135px; margin-left: 0; }
.combo select { appearance: none; grid-area: 1 / 1 / 2 / 3; padding-left: 5px; height: 22px; }
.combo .caret { grid-area: 1 / 2; margin-left: 3px; pointer-events: none; }
.grow { font: 600 17px/20px "Open Sans", sans-serif; width: 18px; color: #555; margin-left: 4px; }
.grow.small { font-size: 14px; margin-left: 2px; }
.grow sup { font: 400 12px/8px "Open Sans", sans-serif; align-self: flex-start; }
.bi { width: 22px; height: 20px; }
.font .bi { width: 23px; }
.serif { font: 700 16px/20px "Liberation Serif", serif; color: #555; }
.split { width: 29px; height: 20px; gap: 5px; }
.split .caret { margin: 0; }
.sep { width: 1px; height: 20px; background: #d0d0d2; margin: 0 3px; flex: none; }
.dialog { position: absolute; right: 8px; bottom: 0; width: 5px; height: 5px; border: 1px solid #888; }
.align { padding-left: 5px; width: 116px; margin-bottom: 8px; }
.align .sep { margin: 0 2px; }
.ic { width: 20px; height: 20px; }
.ic.on { background: #cde5c3; }
.spread { justify-content: space-between; width: 105px; }
.merge { display: grid; grid-template-columns: 150px 82px; padding: 0 6px 0 4px; }
.num { padding-left: 7px; width: 85px; }
.pct { font-weight: 400; }
.dec { width: 21px; flex-direction: column; font: 10px/9px "Liberation Sans", sans-serif; }
.dec i { color: #5b8de0; font-style: normal; }
.dec:last-child { width: 28px; }
.ae { border: 1px solid #777; color: #4b9a30; padding: 0 1px; font-size: 8px; }
.style { display: grid; grid-template-columns: 142px; }
.edit { display: grid; grid-template-columns: 72px 85px 91px 50px 71px 81px 98px 57px 141px; padding: 0 5px 0 4px; }
.settings { flex: 1 1 0; min-width: 0; overflow: hidden; padding: 17px 0 0 10px; border: 0; align-items: flex-start; margin-right: 2px; }
.ribbon-more { width: 13px; background: #b6b9c3; margin: -3px 0 -4px; }

/* document bar */
.docbar { flex: none; height: 25px; display: flex; align-items: flex-start; }
.quick { display: flex; align-items: center; height: 24px; padding-left: 3px; }
.quick button { width: 21px; height: 20px; }
.quick .narrow { width: 16px; }
.quick .tall { margin: 0 3px 0 1px; }
.doc { width: 180px; height: 24px; display: flex; align-items: center; gap: 7px; padding: 0 9px 0 6px; background: #ebf2e7; border-bottom: 2px solid #70a559; }
.doc button { margin-left: auto; }
.new { margin: 5px 0 0 7px; }
.pane { margin: 7px 6px 0 auto; }

/* formula bar */
.formula { flex: none; height: 19px; display: flex; padding-right: 7px; background: #f0f0f1; }
.namebox { width: 125px; display: flex; align-items: center; background: #fff; border: 1px solid #c2c2c4; border-left: 0; padding-right: 3px; }
.namebox input { flex: 1; min-width: 0; width: 100px; text-align: center; font: 14px/16px "Liberation Serif", serif; }
.fx-tools { width: 86px; display: flex; align-items: center; justify-content: flex-end; gap: 8px; padding-right: 16px; }
.fx { font: italic 18px/18px "Liberation Serif", serif; }
.fbar { flex: 1; min-width: 0; background: #fff; border: 1px solid #c2c2c4; border-right: 0; padding: 0 4px; }

/* grid */
.work { flex: 1; min-height: 0; display: flex; background: #dfe0e2; }
.content { flex: 1; min-width: 0; display: flex; flex-direction: column; }
.sheet-area { flex: 1; min-height: 0; display: flex; }
.viewport { flex: 1; min-width: 0; overflow: hidden; position: relative; background: #fff; }
.sheet { border-collapse: separate; border-spacing: 0; table-layout: fixed; width: 100%; }
.c-head { width: 42px; }
.c-cell { width: 88px; }
.sheet th, .sheet td { padding: 0; height: 17px; border: 0 solid #c3c3c5; border-width: 0 1px 1px 0; }
.sheet th { font: 400 14px/16px "DejaVu Sans", sans-serif; color: #4c4c4e; background: #eeeeef; }
.sheet thead th { height: 19px; padding-top: 2px; }
.sheet tbody th { border-bottom-color: #dcdcde; }
.sheet th:last-child, .sheet td:last-child { border-right: 0; }
.sheet th.sel { background: #d3e6cb; color: #3f9428; }
.sheet .corner { background: linear-gradient(135deg, #0000 50%, #bbb 50%) 30px 7px / 8px 8px no-repeat, #eeeeef; }
.cursor { position: relative; }
.cursor::before { content: ""; position: absolute; inset: -2px; border: 2px solid #5aa02f; }
.cursor::after { content: ""; position: absolute; right: -3px; bottom: -3px; width: 6px; height: 6px; background: #5aa02f; border: 1px solid #fff; border-width: 1px 0 0 1px; }
.watermark { position: absolute; right: 60px; bottom: 7px; display: flex; align-items: center; gap: 5px; opacity: .85; font: 400 34px/40px "DejaVu Sans", sans-serif; color: #8a9dc6; -webkit-text-stroke: 1px; }
.watermark b { font-weight: 400; color: #d885a6; }

/* scrollbars */
.arrow { display: block; border: 5px solid transparent; width: 0; height: 0; flex: none; }
.arrow.up { border-top: 0; border-bottom-color: #555; }
.arrow.down { border-bottom: 0; border-top-color: #555; }
.arrow.left { border-left: 0; border-right-color: #555; }
.arrow.right { border-right: 0; border-left-color: #555; }
.vscroll { flex: none; width: 19px; background: #c4c4c6; display: flex; flex-direction: column; align-items: center; padding: 9px 0 7px; gap: 12px; }
.splitter { width: 13px; height: 2px; background: #999; }
.vthumb { flex: 1; width: 13px; margin-bottom: 2px; background: #f3f3f4; display: flex; flex-direction: column; align-items: center; justify-content: center; gap: 3px; }
.vthumb i { width: 7px; height: 1px; background: #888; }
.side { flex: none; width: 7px; display: flex; align-items: center; padding-top: 22px; }
.side button { width: 7px; height: 101px; background: #5aa32f; }

.sheetbar { flex: none; height: 25px; display: flex; align-items: center; background: #c4c4c6; }
.navs { width: 74px; display: flex; padding: 0 17px 0 9px; justify-content: space-between; }
.sheet-tab { width: 79px; height: 25px; background: #fff; color: #3f9428; }
.dots { gap: 3px; margin: 0 10px; }
.dots i { width: 3px; height: 3px; background: #5aa32f; }
.hscroll { margin-left: auto; width: 41%; display: flex; align-items: center; gap: 12px; padding-right: 25px; }
.bar { width: 1px; height: 12px; background: #888; flex: none; }
.htrack { flex: 1; padding-right: 22px; }
.hthumb { height: 13px; background: #f3f3f4; display: flex; align-items: center; justify-content: center; gap: 3px; }
.hthumb i { width: 1px; height: 7px; background: #888; }

/* status bar */
.status { flex: none; height: 22px; display: flex; align-items: center; justify-content: flex-end; background: #dddddf; padding-right: 6px; }
.led { width: 7px; height: 7px; background: #4d9e2d; margin: 0 4px; }
.backup { width: 89px; }
.view { width: 22px; height: 22px; margin-right: 6px; }
.view.drop { width: 30px; margin-right: 2px; }
.view.on { background: #cde5c3; margin-right: 5px; }
.pctval { margin: 0 6px 0 13px; }
.status input { appearance: none; width: 134px; height: 14px; margin: 0 6px 0 8px; background: linear-gradient(90deg, #56a52c 50%, #8a8a8c 50%) center / 100% 2px no-repeat; }
.status input::-webkit-slider-thumb { appearance: none; width: 14px; height: 14px; border-radius: 50%; background: #f3f3f4; border: 1px solid #777; }

.pointer { position: absolute; left: 813px; top: 140px; filter: drop-shadow(1px 2px 1px #0006); }
```
